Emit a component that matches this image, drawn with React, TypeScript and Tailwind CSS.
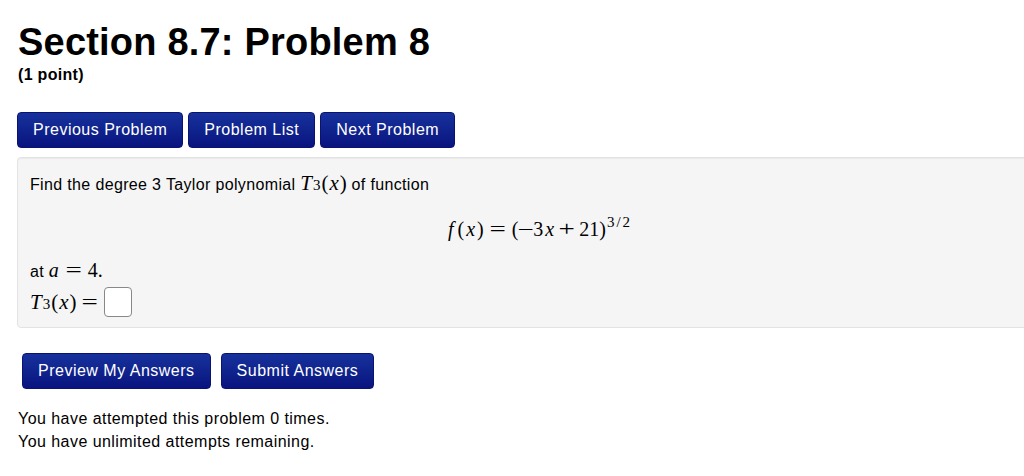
import React from "react";

const sans = { fontFamily: '"Liberation Sans", Arial, sans-serif' };

function NavButton({ label }: { label: string }) {
  return (
    <button className="h-9 px-[15px] rounded-[4px] border border-[#0a1470] bg-gradient-to-b from-[#17319c] to-[#0a137f] text-white text-[16px] tracking-[0.5px] leading-none">
      {label}
    </button>
  );
}

// italic math variable
function I({ children, className = "" }: { children: React.ReactNode; className?: string }) {
  return <span className={"italic font-['Liberation_Serif',serif] " + className}>{children}</span>;
}

// upright math symbol
function R({ children, className = "" }: { children: React.ReactNode; className?: string }) {
  return <span className={"font-['Liberation_Serif',serif] " + className}>{children}</span>;
}

// operator, stretched a bit so it looks like the TeX glyph
function Op({ children, className = "" }: { children: React.ReactNode; className?: string }) {
  return (
    <span className={"inline-block w-[15px] text-center font-['Liberation_Serif',serif] " + className}>
      <span className="inline-block scale-x-[1.45]">{children}</span>
    </span>
  );
}

function T3x() {
  return (
    <span className="text-[21px] whitespace-nowrap tracking-normal">
      <I className="pr-[1px]">T</I>
      <R className="text-[15px]">3</R>
      <R className="ml-[1px]">(</R>
      <I className="px-[1px]">x</I>
      <R>)</R>
    </span>
  );
}

export default function App() {
  return (
    <div className="w-[1024px] h-[476px] overflow-hidden bg-white text-black" style={sans}>
      <div className="pl-[18px] pt-[23px]">
        <h1 className="text-[38px] font-bold leading-[38px] tracking-[0.2px]">Section 8.7: Problem 8</h1>
        <div className="mt-[5px] text-[16px] font-bold leading-[18px] tracking-[0.3px]">(1 point)</div>
      </div>

      <div className="flex gap-[5px] pl-[17px] mt-[28px]">
        <NavButton label="Previous Problem" />
        <NavButton label="Problem List" />
        <NavButton label="Next Problem" />
      </div>

      <div className="ml-[17px] mt-[9px] w-[1046px] h-[171px] rounded-[4px] border border-[#e3e3e3] bg-[#f5f5f5] shadow-[inset_0_1px_1px_rgba(0,0,0,0.05)] px-[12px] pt-[12px] text-[16px] tracking-[0.35px]">
        <div className="leading-[26px]">
          Find the degree 3 Taylor polynomial <T3x /> of function
        </div>
        <div className="text-center mt-[16px] leading-[30px] text-[20px] tracking-normal">
          <I className="pr-[4px]">f</I>
          <R>(</R>
          <I className="px-[2px]">x</I>
          <R>)</R>
          <Op className="ml-[6px] mr-[7px]">=</Op>
          <R>(</R>
          <Op>−</Op>
          <R>3</R>
          <I className="px-[2px]">x</I>
          <Op className="ml-[3px] mr-[5px]">+</Op>
          <R>21)</R>
          <R className="text-[15px] tracking-[2px] relative top-[-9px] ml-[1px]">3/2</R>
        </div>
        <div className="mt-[11px] leading-[26px]">
          at{" "}
          <span className="text-[20px] tracking-normal">
            <I>a</I>
            <Op className="mx-[7px]">=</Op>
            <R>4.</R>
          </span>
        </div>
        <div className="flex items-center mt-[1px] tracking-normal">
          <T3x />
          <span className="text-[20px]">
            <Op className="mx-[6px]">=</Op>
          </span>
          <input className="w-[28px] h-[30px] rounded-[4px] border border-[#888] bg-white" />
        </div>
      </div>

      <div className="flex gap-[10px] pl-[22px] mt-[25px]">
        <NavButton label="Preview My Answers" />
        <NavButton label="Submit Answers" />
      </div>

      <div className="pl-[18px] mt-[18px] text-[16px] tracking-[0.45px] leading-[23px]">
        <div>You have attempted this problem 0 times.</div>
        <div>You have unlimited attempts remaining.</div>
      </div>
    </div>
  );
}
